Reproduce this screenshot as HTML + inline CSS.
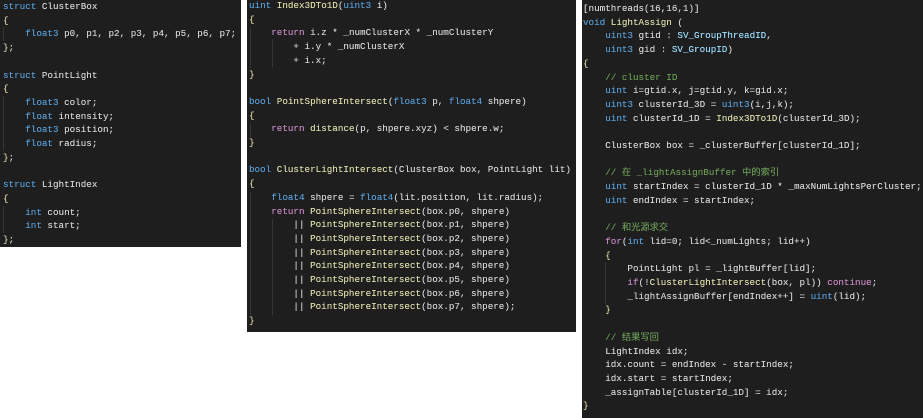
<!DOCTYPE html>
<html>
<head>
<meta charset="utf-8">
<style>
html,body{margin:0;padding:0;background:#fff;width:923px;height:418px;overflow:hidden}
.p{position:absolute;top:0;background:#1e1e1e;overflow:hidden}
pre{position:absolute;margin:0;font-family:"Liberation Mono","Noto Sans CJK SC",monospace;font-size:9.25px;line-height:13.7px;color:#d4d4d4;white-space:pre;filter:blur(.35px);text-shadow:0 0 .3px currentColor}
.k{color:#569cd6}.c{color:#c586c0}.f{color:#dcdcaa}.b{color:#d6cfa0}.g{color:#6a9955}.v{color:#9cdcfe}
.l{position:absolute;width:1px;background:#353535}
</style>
</head>
<body>
<div class="p" style="left:0;width:241px;height:247px">
<div class="l" style="left:3px;top:27px;height:14px"></div>
<div class="l" style="left:3px;top:96px;height:55px"></div>
<div class="l" style="left:3px;top:206px;height:27px"></div>
<pre style="left:3px;top:0"><span class="k">struct</span> ClusterBox
<span class="b">{</span>
    <span class="k">float3</span> p0, p1, p2, p3, p4, p5, p6, p7;
<span class="b">}</span>;

<span class="k">struct</span> PointLight
<span class="b">{</span>
    <span class="k">float3</span> color;
    <span class="k">float</span> intensity;
    <span class="k">float3</span> position;
    <span class="k">float</span> radius;
<span class="b">}</span>;

<span class="k">struct</span> LightIndex
<span class="b">{</span>
    <span class="k">int</span> count;
    <span class="k">int</span> start;
<span class="b">}</span>;</pre>
</div>
<div class="p" style="left:247px;width:329px;height:332px">
<div class="l" style="left:3px;top:27px;height:41px"></div>
<div class="l" style="left:25px;top:39px;height:28px"></div>
<div class="l" style="left:3px;top:123px;height:14px"></div>
<div class="l" style="left:3px;top:192px;height:123px"></div>
<div class="l" style="left:25px;top:219px;height:96px"></div>
<pre style="left:2px;top:-1px"><span class="k">uint</span> <span class="f">Index3DTo1D</span>(<span class="k">uint3</span> i)
<span class="b">{</span>
    <span class="c">return</span> i.z * _numClusterX * _numClusterY
        + i.y * _numClusterX
        + i.x;
<span class="b">}</span>

<span class="k">bool</span> <span class="f">PointSphereIntersect</span>(<span class="k">float3</span> p, <span class="k">float4</span> shpere)
<span class="b">{</span>
    <span class="c">return</span> <span class="f">distance</span>(p, shpere.xyz) &lt; shpere.w;
<span class="b">}</span>

<span class="k">bool</span> <span class="f">ClusterLightIntersect</span>(ClusterBox box, PointLight lit)
<span class="b">{</span>
    <span class="k">float4</span> shpere = <span class="k">float4</span>(lit.position, lit.radius);
    <span class="c">return</span> <span class="f">PointSphereIntersect</span>(box.p0, shpere)
        || <span class="f">PointSphereIntersect</span>(box.p1, shpere)
        || <span class="f">PointSphereIntersect</span>(box.p2, shpere)
        || <span class="f">PointSphereIntersect</span>(box.p3, shpere)
        || <span class="f">PointSphereIntersect</span>(box.p4, shpere)
        || <span class="f">PointSphereIntersect</span>(box.p5, shpere)
        || <span class="f">PointSphereIntersect</span>(box.p6, shpere)
        || <span class="f">PointSphereIntersect</span>(box.p7, shpere);
<span class="b">}</span></pre>
</div>
<div class="p" style="left:582px;width:341px;height:418px">
<div class="l" style="left:23px;top:263px;height:41px"></div>
<pre style="left:1px;top:2px">[numthreads(16,16,1)]
<span class="k">void</span> <span class="f">LightAssign</span> (
    <span class="k">uint3</span> gtid : <span class="v">SV_GroupThreadID</span>,
    <span class="k">uint3</span> gid : <span class="v">SV_GroupID</span>)
<span class="b">{</span>
    <span class="g">// cluster ID</span>
    <span class="k">uint</span> i=gtid.x, j=gtid.y, k=gid.x;
    <span class="k">uint3</span> clusterId_3D = <span class="k">uint3</span>(i,j,k);
    <span class="k">uint</span> clusterId_1D = <span class="f">Index3DTo1D</span>(clusterId_3D);

    ClusterBox box = _clusterBuffer[clusterId_1D];

    <span class="g">// 在 _lightAssignBuffer 中的索引</span>
    <span class="k">uint</span> startIndex = clusterId_1D * _maxNumLightsPerCluster;
    <span class="k">uint</span> endIndex = startIndex;

    <span class="g">// 和光源求交</span>
    <span class="c">for</span>(<span class="k">int</span> lid=0; lid&lt;_numLights; lid++)
    <span class="b">{</span>
        PointLight pl = _lightBuffer[lid];
        <span class="c">if</span>(!<span class="f">ClusterLightIntersect</span>(box, pl)) <span class="c">continue</span>;
        _lightAssignBuffer[endIndex++] = <span class="k">uint</span>(lid);
    <span class="b">}</span>

    <span class="g">// 结果写回</span>
    LightIndex idx;
    idx.count = endIndex - startIndex;
    idx.start = startIndex;
    _assignTable[clusterId_1D] = idx;
<span class="b">}</span></pre>
</div>
</body>
</html>
